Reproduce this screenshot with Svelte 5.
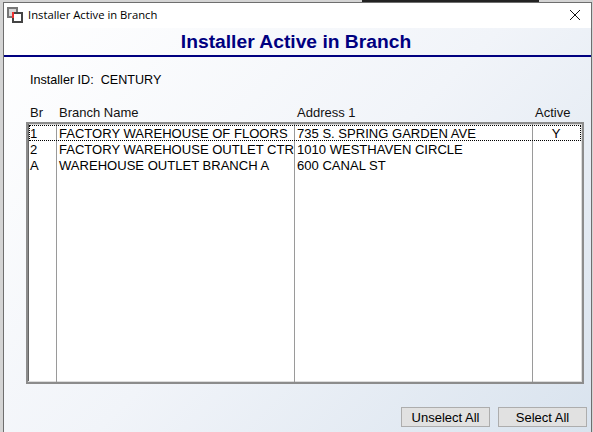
<script lang="ts">
	interface Branch {
		br: string;
		name: string;
		address: string;
		active: string;
	}

	const branches: Branch[] = [
		{ br: '1', name: 'FACTORY WAREHOUSE OF FLOORS', address: '735 S. SPRING GARDEN AVE', active: 'Y' },
		{ br: '2', name: 'FACTORY WAREHOUSE OUTLET CTR', address: '1010 WESTHAVEN CIRCLE', active: '' },
		{ br: 'A', name: 'WAREHOUSE OUTLET BRANCH A', address: '600 CANAL ST', active: '' }
	];
</script>

<div class="desktop">
	<div class="behind"></div>
	<div class="window">
		<div class="titlebar">
			<svg class="app-icon" width="16" height="16" viewBox="0 0 16 16">
				<rect x="1" y="1" width="9" height="9" fill="#d8d8d8" stroke="#777" stroke-width="2" />
				<rect x="6" y="6" width="9" height="9" fill="#fff" stroke="#444" stroke-width="2" />
				<path d="M6 5V11" fill="none" stroke="#f03030" stroke-width="2" />
			</svg>
			<span class="title">Installer Active in Branch</span>
			<svg class="close" width="10" height="10" viewBox="0 0 10 10">
				<path d="M0 0L10 10M10 0L0 10" stroke="#111" stroke-width="1" fill="none" />
			</svg>
		</div>
		<div class="body">
			<h1>Installer Active in Branch</h1>
			<div class="installer"><span>Installer ID:</span><span>CENTURY</span></div>
			<div class="cols head">
				<span class="c-br">Br</span>
				<span class="c-name">Branch Name</span>
				<span class="c-addr">Address 1</span>
				<span class="c-active">Active</span>
			</div>
			<div class="list">
				<div class="rows">
					<div class="divider d1"></div>
					<div class="divider d2"></div>
					<div class="divider d3"></div>
					{#each branches as b, i}
						<div class="cols row" class:focus={i === 0}>
							<span class="c-br">{b.br}</span>
							<span class="c-name">{b.name}</span>
							<span class="c-addr">{b.address}</span>
							<span class="c-active">{b.active}</span>
						</div>
					{/each}
				</div>
			</div>
			<div class="buttons">
				<button type="button">Unselect All</button>
				<button type="button">Select All</button>
			</div>
		</div>
	</div>
</div>

<style>
	:global(body) {
		margin: 0;
		background: #d4d4d4;
		font-family: 'Liberation Sans', Arial, sans-serif;
	}
	.desktop {
		position: relative;
		width: 593px;
		height: 432px;
		padding: 2px 1px 0 3px;
		box-sizing: border-box;
		overflow: hidden;
		background: #d4d4d4;
	}
	.behind {
		position: absolute;
		left: 362px;
		top: 0;
		width: 177px;
		height: 2px;
		background: #222;
	}
	.window {
		height: 430px;
		display: flex;
		flex-direction: column;
		border-top: 1px solid #6e6e6e;
		border-left: 1px solid #6e6e6e;
		border-right: 1px solid #6e6e6e;
		box-sizing: border-box;
		background: #fff;
	}
	.titlebar {
		height: 25px;
		flex: none;
		display: flex;
		align-items: center;
		padding: 0 7px 0 3px;
		font-size: 12px;
		color: #000;
		background: #fff;
	}
	.app-icon {
		margin-right: 5px;
		margin-top: -2px;
	}
	.title {
		flex: 1;
		margin-top: -3px;
		font-family: 'Open Sans', 'Liberation Sans', sans-serif;
		font-size: 11.25px;
	}
	.close {
		margin-right: 4px;
		margin-top: -1px;
	}
	.body {
		flex: 1;
		display: flex;
		flex-direction: column;
		background: linear-gradient(135deg, #ffffff 0%, #f1f4f9 50%, #d9e3ee 100%);
	}
	h1 {
		margin: 0;
		height: 27px;
		box-sizing: content-box;
		border-bottom: 2px solid #000080;
		padding-right: 3px;
		font-size: 19.25px;
		line-height: 28px;
		font-weight: bold;
		color: #000080;
		text-align: center;
	}
	.installer {
		display: flex;
		gap: 7px;
		margin: 14px 0 0 26px;
		font-size: 12.6px;
		line-height: 18px;
		color: #000;
	}
	.cols {
		display: grid;
		grid-template-columns: 29px 238px 238px 50px;
		font-size: 13px;
	}
	.head {
		margin: 15px 0 0 26px;
		line-height: 18px;
		height: 16px;
		color: #111;
	}
	.list {
		margin: 2px 0 0 22px;
		width: 558px;
		height: 262px;
		box-sizing: border-box;
		border: 2px solid #8c8c8c;
		background: #fff;
		padding: 0 1px 1px 0;
		outline: 1px solid #dcdcdc;
		outline-offset: -3px;
	}
	.rows {
		position: relative;
		height: 100%;
		border-left: 1px solid #666;
		padding-top: 1px;
		box-sizing: border-box;
	}
	.divider {
		position: absolute;
		top: 0;
		bottom: -1px;
		width: 1px;
		background: #9a9a9a;
	}
	.d1 {
		left: 27px;
	}
	.d2 {
		left: 265px;
	}
	.d3 {
		left: 503px;
	}
	.row {
		position: relative;
		grid-template-columns: 28px 238px 238px 46px;
		height: 16px;
		font-size: 13.05px;
		line-height: 18px;
		color: #000;
		white-space: nowrap;
		box-sizing: border-box;
	}
	.row.focus {
		outline: 1px dotted #000;
		outline-offset: -1px;
	}
	.row .c-br {
		padding-left: 1px;
	}
	.row .c-name {
		padding-left: 2px;
	}
	.row .c-addr {
		padding-left: 2px;
	}
	.row .c-active {
		text-align: center;
	}
	.buttons {
		display: flex;
		gap: 8px;
		justify-content: flex-end;
		margin: 23px 4px 0 0;
	}
	button {
		width: 89px;
		height: 20px;
		padding: 0;
		font: 13px 'Liberation Sans', Arial, sans-serif;
		color: #000;
		background: #e1e1e1;
		border: 1px solid #adadad;
		border-radius: 0;
	}
</style>
